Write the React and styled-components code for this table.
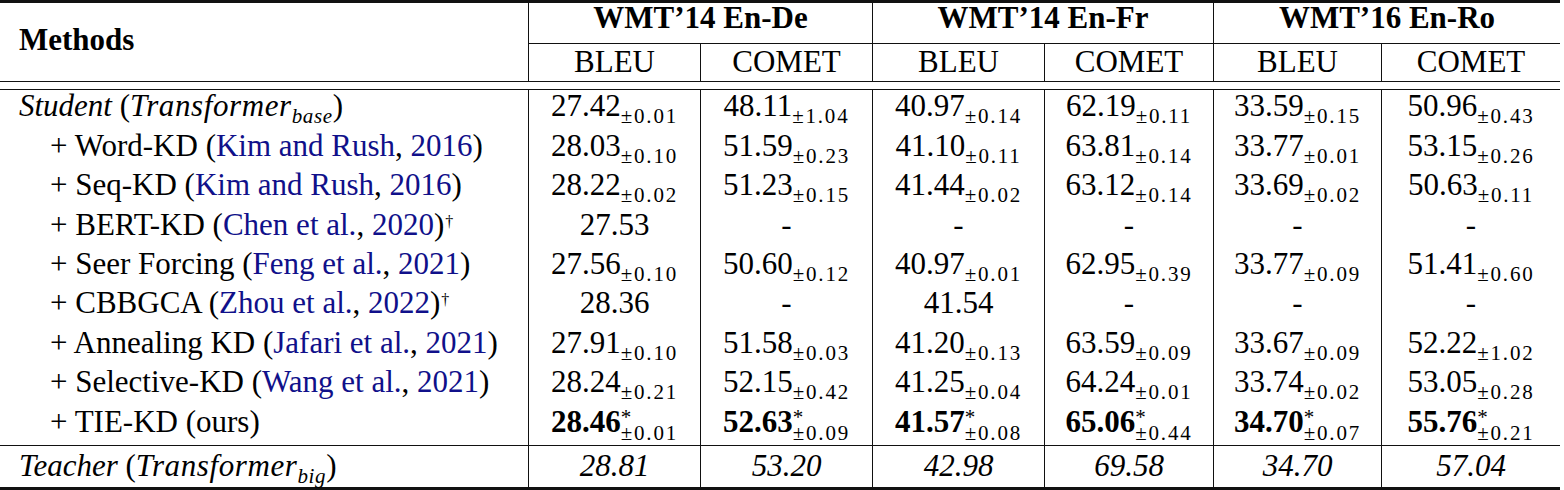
import React from "react";
import styled, { createGlobalStyle } from "styled-components";

const Global = createGlobalStyle`
  html, body { margin: 0; padding: 0; background: #fff; }
  body { font-family: "Liberation Serif", "Times New Roman", serif; color: #000; }
`;

const COLS = "528px 172px 172px 172px 169px 168px 179px";

const Table = styled.div`
  width: 1560px;
  border-top: 3px solid #111;
  border-bottom: 3px solid #111;
  font-family: "Liberation Serif", "Times New Roman", serif;
  font-size: 31px;
  color: #000;
`;

const Header = styled.div`
  display: grid;
  grid-template-columns: ${COLS};
  grid-template-rows: 40px 38px;
`;

const MethodsHead = styled.div`
  grid-row: 1 / 3;
  display: flex;
  align-items: center;
  padding: 0 0 4px 19px;
  font-weight: bold;
`;

const GroupHead = styled.div`
  grid-column: span 2;
  border-left: 1px solid #111;
  display: flex;
  align-items: center;
  justify-content: center;
  padding-bottom: 11px;
  font-weight: bold;
  line-height: 1;
`;

const SubHead = styled.div`
  border-left: 1px solid #111;
  border-top: 1px solid #111;
  display: flex;
  align-items: center;
  justify-content: center;
  padding-bottom: 2px;
  line-height: 1;
`;

const DoubleRule = styled.div`
  height: 7px;
  border-top: 1px solid #111;
  border-bottom: 1px solid #111;
`;

const Body = styled.div`
  display: grid;
  grid-template-rows: repeat(9, 1fr);
  height: 355px;
`;

const Row = styled.div`
  display: grid;
  grid-template-columns: ${COLS};
  border-top: ${(p) => (p.$ruled ? "1px solid #111" : "none")};
  height: ${(p) => (p.$height ? p.$height : "auto")};
`;

const MethodCell = styled.div`
  display: flex;
  align-items: center;
  padding-left: ${(p) => (p.$indent ? "50px" : "19px")};
  padding-bottom: ${(p) => p.$pb || "8px"};
  white-space: nowrap;
  line-height: 1;
`;

const ValueCell = styled.div`
  border-left: 1px solid #111;
  display: flex;
  align-items: center;
  justify-content: center;
  padding-bottom: ${(p) => p.$pb || "8px"};
  white-space: nowrap;
  line-height: 1;
  font-style: ${(p) => (p.$italic ? "italic" : "normal")};
`;

const Line = styled.span`
  display: block;
  line-height: 1;
`;

const Main = styled.span`
  font-weight: ${(p) => (p.$bold ? "bold" : "normal")};
`;

const Sub = styled.span`
  font-size: 21px;
  letter-spacing: 1.8px;
  vertical-align: ${(p) => p.$drop || "-7px"};
  line-height: 0;
  position: relative;
`;

const Star = styled.span`
  position: absolute;
  left: 0;
  top: -14px;
  font-size: 21px;
  line-height: 1;
  letter-spacing: 0;
`;

const Ital = styled.span`
  font-style: italic;
  letter-spacing: ${(p) => (p.$math ? "0.6px" : "0")};
`;

const ItalSub = styled.span`
  font-style: italic;
  font-size: 21px;
  vertical-align: -7px;
  line-height: 0;
  letter-spacing: 0.6px;
`;

const Cite = styled.span`
  color: #10108a;
`;

const Dagger = styled.span`
  font-size: 16px;
  vertical-align: 8px;
  line-height: 0;
  margin-left: 1px;
`;

const groups = ["WMT’14 En-De", "WMT’14 En-Fr", "WMT’16 En-Ro"];

const rows = [
  {
    label: "Word-KD",
    author: "Kim and Rush",
    year: "2016",
    vals: [["28.03", "0.10"], ["51.59", "0.23"], ["41.10", "0.11"], ["63.81", "0.14"], ["33.77", "0.01"], ["53.15", "0.26"]],
  },
  {
    label: "Seq-KD",
    author: "Kim and Rush",
    year: "2016",
    vals: [["28.22", "0.02"], ["51.23", "0.15"], ["41.44", "0.02"], ["63.12", "0.14"], ["33.69", "0.02"], ["50.63", "0.11"]],
  },
  {
    label: "BERT-KD",
    author: "Chen et al.",
    year: "2020",
    dagger: true,
    vals: [["27.53"], ["-"], ["-"], ["-"], ["-"], ["-"]],
  },
  {
    label: "Seer Forcing",
    author: "Feng et al.",
    year: "2021",
    vals: [["27.56", "0.10"], ["50.60", "0.12"], ["40.97", "0.01"], ["62.95", "0.39"], ["33.77", "0.09"], ["51.41", "0.60"]],
  },
  {
    label: "CBBGCA",
    author: "Zhou et al.",
    year: "2022",
    dagger: true,
    vals: [["28.36"], ["-"], ["41.54"], ["-"], ["-"], ["-"]],
  },
  {
    label: "Annealing KD",
    author: "Jafari et al.",
    year: "2021",
    vals: [["27.91", "0.10"], ["51.58", "0.03"], ["41.20", "0.13"], ["63.59", "0.09"], ["33.67", "0.09"], ["52.22", "1.02"]],
  },
  {
    label: "Selective-KD",
    author: "Wang et al.",
    year: "2021",
    vals: [["28.24", "0.21"], ["52.15", "0.42"], ["41.25", "0.04"], ["64.24", "0.01"], ["33.74", "0.02"], ["53.05", "0.28"]],
  },
];

const student = [["27.42", "0.01"], ["48.11", "1.04"], ["40.97", "0.14"], ["62.19", "0.11"], ["33.59", "0.15"], ["50.96", "0.43"]];
const ours = [["28.46", "0.01"], ["52.63", "0.09"], ["41.57", "0.08"], ["65.06", "0.44"], ["34.70", "0.07"], ["55.76", "0.21"]];
const teacher = ["28.81", "53.20", "42.98", "69.58", "34.70", "57.04"];

function Value({ v, pm, best }) {
  return (
    <ValueCell>
      <Line>
        <Main $bold={best}>{v}</Main>
        {pm && (
          <Sub $drop={best ? "-8px" : "-7px"}>
            {best && <Star>*</Star>}±{pm}
          </Sub>
        )}
      </Line>
    </ValueCell>
  );
}

export default function App() {
  return (
    <>
      <Global />
      <Table>
        <Header>
          <MethodsHead>Methods</MethodsHead>
          {groups.map((g) => (
            <GroupHead key={g}>{g}</GroupHead>
          ))}
          {groups.map((g) => (
            <React.Fragment key={g}>
              <SubHead>BLEU</SubHead>
              <SubHead>COMET</SubHead>
            </React.Fragment>
          ))}
        </Header>
        <DoubleRule />
        <Body>
          <Row>
            <MethodCell>
              <Line>
                <Ital>Student</Ital> (<Ital $math>Transformer</Ital>
                <ItalSub>base</ItalSub>)
              </Line>
            </MethodCell>
            {student.map(([v, pm], i) => (
              <Value key={i} v={v} pm={pm} />
            ))}
          </Row>
          {rows.map((r) => (
            <Row key={r.label}>
              <MethodCell $indent>
                <Line>
                  + {r.label} (<Cite>{r.author}</Cite>, <Cite>{r.year}</Cite>)
                  {r.dagger && <Dagger>†</Dagger>}
                </Line>
              </MethodCell>
              {r.vals.map(([v, pm], i) => (
                <Value key={i} v={v} pm={pm} />
              ))}
            </Row>
          ))}
          <Row>
            <MethodCell $indent>
              <Line>+ TIE-KD (ours)</Line>
            </MethodCell>
            {ours.map(([v, pm], i) => (
              <Value key={i} v={v} pm={pm} best />
            ))}
          </Row>
        </Body>
        <Row $ruled $height="41px">
          <MethodCell $pb="3px">
            <Line>
              <Ital>Teacher</Ital> (<Ital $math>Transformer</Ital>
              <ItalSub>big</ItalSub>)
            </Line>
          </MethodCell>
          {teacher.map((v, i) => (
            <ValueCell key={i} $italic $pb="3px">
              {v}
            </ValueCell>
          ))}
        </Row>
      </Table>
    </>
  );
}
